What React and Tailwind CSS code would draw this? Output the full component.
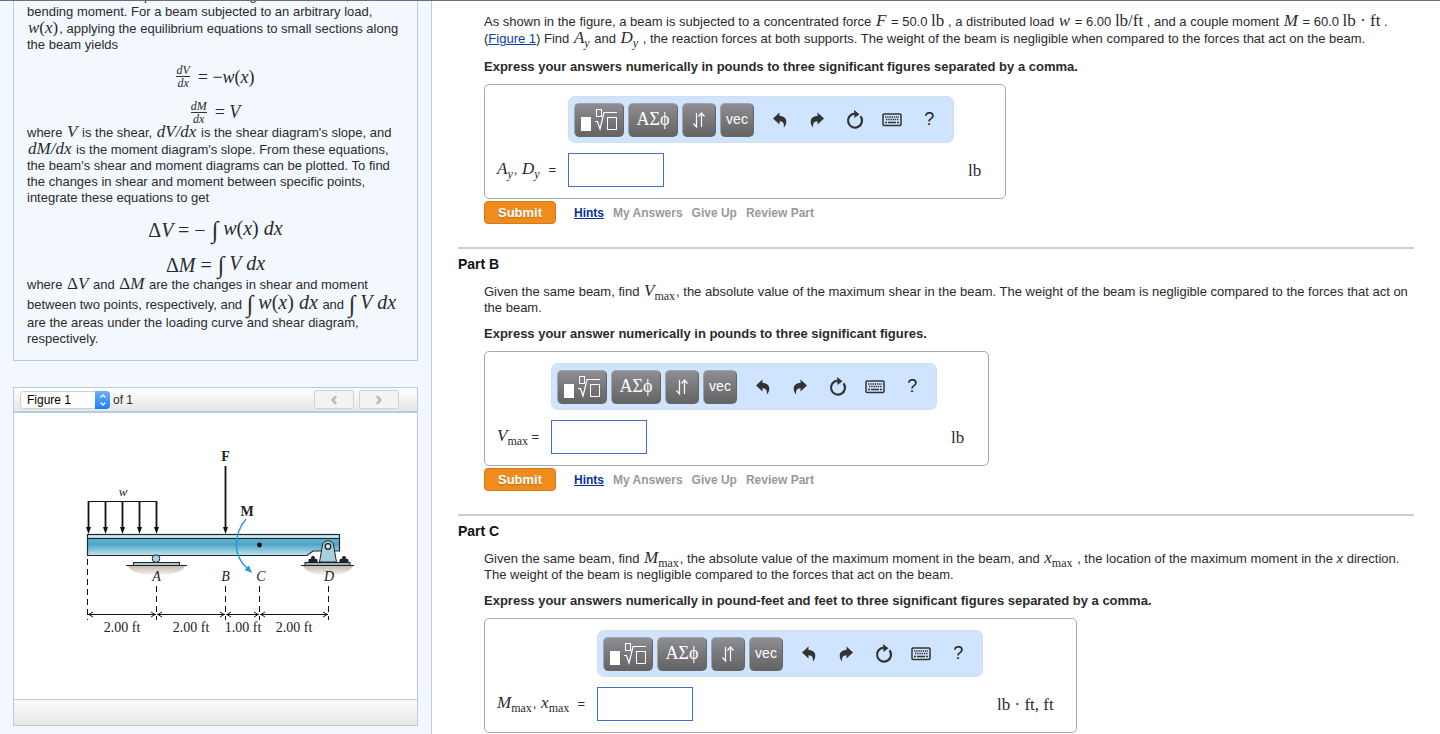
import React from 'react';
import { ChevronDown, ChevronUp, ChevronLeft, ChevronRight } from 'lucide-react';

const MathText = ({ children, size = 'text-[17px]' }) => (
  <span className={`mx-px font-['Liberation_Serif',serif] italic leading-[15px] ${size}`}>{children}</span>
);

const Up = ({ children }) => <span className="not-italic">{children}</span>;

const Sub = ({ children }) => (
  <span className="inline-block translate-y-1 text-[12px] leading-none">{children}</span>
);

const Unit = ({ children }) => (
  <span className="font-['Liberation_Serif',serif] text-[17px] leading-[15px]">{children}</span>
);

const Frac = ({ top, bottom }) => (
  <span className="inline-flex flex-col items-center text-[12px] leading-[12px]">
    <span className="border-b border-[#333]">{top}</span>
    <span>{bottom}</span>
  </span>
);

const Int = () => <span className="align-[-3px] not-italic text-[24px] leading-[22px]">∫</span>;

const Equation = ({ children, className }) => (
  <div className={`flex items-center justify-center font-['Liberation_Serif',serif] italic leading-none ${className}`}>
    {children}
  </div>
);

const Theory = () => (
  <section className="border border-t-0 border-[#b9cbe0] px-[13px] pb-[13px] leading-4">
    <div className="-mt-[13px]">about the relationship that exists among the load, shear, and</div>
    <p>
      bending moment. For a beam subjected to an arbitrary load,<br />
      <MathText>w<Up>(</Up>x<Up>)</Up></MathText>, applying the equilibrium equations to small sections along the beam yields
    </p>
    <Equation className="mt-[6px] h-[35px] gap-2 text-[18px]">
      <Frac top="dV" bottom="dx" />
      <span><Up>= −</Up>w<Up>(</Up>x<Up>)</Up></span>
    </Equation>
    <Equation className="mt-[6px] h-6 gap-2 text-[18px]">
      <Frac top="dM" bottom="dx" />
      <span><Up>=</Up> V</span>
    </Equation>
    <p>
      where <MathText>V</MathText> is the shear, <MathText>dV/dx</MathText> is the shear diagram's slope, and<br />
      <MathText>dM/dx</MathText> is the moment diagram's slope. From these equations, the beam's shear and moment
      diagrams can be plotted. To find the changes in shear and moment between specific points, integrate these
      equations to get
    </p>
    <Equation className="mt-[6px] h-[35px] gap-[6px] text-[20px]">
      <span><Up>Δ</Up>V <Up>= −</Up></span>
      <span><Int /> w<Up>(</Up>x<Up>)</Up> dx</span>
    </Equation>
    <Equation className="mt-[6px] h-[23px] gap-[6px] text-[20px]">
      <span><Up>Δ</Up>M <Up>=</Up></span>
      <span><Int /> V dx</span>
    </Equation>
    <p>
      where <MathText><Up>Δ</Up>V</MathText> and <MathText><Up>Δ</Up>M</MathText> are the changes in shear and moment<br />
      between two points, respectively, and{' '}
      <MathText size="text-[20px]"><Int /> w<Up>(</Up>x<Up>)</Up> dx</MathText> and{' '}
      <MathText size="text-[20px]"><Int /> V dx</MathText><br />
      are the areas under the loading curve and shear diagram, respectively.
    </p>
  </section>
);

const BeamDiagram = () => (
  <svg width="300" height="200" viewBox="0 0 300 200" role="img" aria-label="Loaded beam">
    <defs>
      <linearGradient id="beam" x1="0" y1="0" x2="0" y2="1">
        <stop offset="0" stopColor="#6fb9d3" />
        <stop offset="0.35" stopColor="#4aa5c6" />
        <stop offset="1" stopColor="#c4e3ee" />
      </linearGradient>
      <linearGradient id="ground" x1="0" y1="0" x2="0" y2="1">
        <stop offset="0" stopColor="#c5bbae" />
        <stop offset="1" stopColor="#f6f3ef" />
      </linearGradient>
    </defs>

    {/* beam */}
    <path d="M17.5 98 H269.5 V111 H243 L237 115.5 H17.5 Z" fill="url(#beam)" stroke="#1f2a30" strokeWidth="1.2" />
    <rect x="17.5" y="94.5" width="252" height="4" fill="#cfe8f2" stroke="#1f2a30" strokeWidth="1.2" />

    {/* roller support at A */}
    <path d="M58 126 H115 Q111 135 87 135 Q62 135 58 126 Z" fill="url(#ground)" />
    <rect x="63.5" y="122.5" width="46" height="3" fill="#a9c8d6" stroke="#222" />
    <path d="M56 125.5 H117" stroke="#222" />
    <circle cx="86" cy="118.6" r="3.8" fill="#a8d4e6" stroke="#222" />

    {/* pin support at D */}
    <path d="M233 126 H283 Q279 135 258 135 Q237 135 233 126 Z" fill="url(#ground)" />
    <rect x="235" y="122.5" width="45" height="3" fill="#8fb3c3" stroke="#222" />
    <path d="M231 125.5 H284" stroke="#222" />
    <path d="M239 122 V119.5 H241 L242 116.5 H244 L245 119.5 H247 V122 Z M270 122 V119.5 H272 L273 116.5 H275 L276 119.5 H278 V122 Z" fill="#222" stroke="#222" />
    <path d="M249.5 122 L252.5 105 A5.7 5.7 0 0 1 263.5 105 L266.5 122 Z" fill="#a8cfe0" stroke="#222" />
    <circle cx="258" cy="106.5" r="2.8" fill="#d5e3e8" stroke="#222" strokeWidth="1.3" />

    {/* distributed load and force */}
    <path d="M18.5 61.5 H87" stroke="#111" strokeWidth="1.2" />
    {[18.5, 35.5, 52.5, 69.5, 86.5].map((x) => (
      <g key={x}>
        <path d={`M${x} 61 V88`} stroke="#111" strokeWidth="1.8" />
        <path d={`M${x - 2.5} 87 H${x + 2.5} L${x} 94 Z`} fill="#111" />
      </g>
    ))}
    <path d="M155.5 26 V88" stroke="#111" strokeWidth="1.8" />
    <path d="M153 87 H158 L155.5 94 Z" fill="#111" />

    {/* couple moment */}
    <path d="M176 79 C163 95 163 116 177 128" fill="none" stroke="#1c9ddb" strokeWidth="1.4" />
    <path d="M182 133 L174.5 130 L179 125.5 Z" fill="#1c9ddb" />
    <circle cx="189.5" cy="105" r="2.4" fill="#111" />

    {/* dimension lines */}
    <g stroke="#111" fill="none">
      <path d="M17.5 119 V180" strokeDasharray="6 4" />
      <path d="M86.5 146 V180 M155.5 146 V180 M189.5 146 V180 M258.5 146 V180" strokeDasharray="6 4" />
      {[[18, 86], [87, 155], [156, 189], [190, 258]].map(([a, b]) => (
        <path key={a} d={`M${a} 174.5 H${b} M${a + 5} 172 L${a + 1} 174.5 L${a + 5} 177 M${b - 5} 172 L${b - 1} 174.5 L${b - 5} 177`} />
      ))}
    </g>

    <g fill="#222" fontFamily="Liberation Serif, serif" fontSize="14" textAnchor="middle">
      <text x="155.5" y="21" fontWeight="bold">F</text>
      <text x="177" y="76" fontWeight="bold">M</text>
      <g fontStyle="italic">
        <text x="53" y="56" fontSize="13">w</text>
        <text x="86.5" y="141">A</text>
        <text x="155.5" y="141">B</text>
        <text x="191" y="141">C</text>
        <text x="259" y="141">D</text>
      </g>
      <text x="52" y="192">2.00 ft</text>
      <text x="121" y="192">2.00 ft</text>
      <text x="173" y="192">1.00 ft</text>
      <text x="224" y="192">2.00 ft</text>
    </g>
  </svg>
);

const navButton =
  'flex h-[19px] w-10 items-center justify-center rounded-xs border border-[#d2d2d2] bg-[#f3f3f3] text-[#bcbcbc]';

const FigurePanel = () => (
  <section className="mt-[26px] border border-[#b9cbe0] bg-white">
    <div className="flex h-[25px] items-center border-b-2 border-[#b9cbe0] bg-linear-to-b from-white to-[#e6e6e6] pl-[6px] pr-[18px] text-[12px]">
      <div className="relative">
        <select aria-label="Figure" className="block h-[18px] w-[90px] appearance-none rounded-[4px] border border-[#cfcfcf] bg-white pl-[6px] text-[12px] leading-4 text-black">
          <option>Figure 1</option>
        </select>
        <span className="pointer-events-none absolute right-0 top-0 flex h-[18px] w-[15px] flex-col items-center justify-center rounded-r-[4px] bg-linear-to-b from-[#6bb3fa] to-[#1a7bf8] text-white">
          <ChevronUp size={8} strokeWidth={4} />
          <ChevronDown size={8} strokeWidth={4} />
        </span>
      </div>
      <span className="ml-[3px]">of 1</span>
      <div className="ml-auto flex gap-[5px]">
        <button aria-label="Previous figure" className={navButton}>
          <ChevronLeft size={12} strokeWidth={5} />
        </button>
        <button aria-label="Next figure" className={navButton}>
          <ChevronRight size={12} strokeWidth={5} />
        </button>
      </div>
    </div>
    <div className="h-[286px] pl-14 pt-[27px]">
      <BeamDiagram />
    </div>
    <div className="h-[26px] border-t border-[#b9cbe0] bg-linear-to-b from-[#fafafa] to-[#e9e9e9]" />
  </section>
);

const TemplateIcon = () => (
  <svg width="38" height="24" viewBox="0 0 38 24" fill="none" stroke="#fff">
    <rect x="1" y="9" width="10" height="14" fill="#fff" stroke="none" />
    <rect x="16.5" y="1.5" width="5" height="7" />
    <path d="M15 13.5 H17.5 L20 21 L24 4.5 H37" strokeWidth="1.2" />
    <rect x="27.5" y="9.5" width="9" height="12" />
  </svg>
);

const ArrowsIcon = () => (
  <svg width="14" height="18" viewBox="0 0 14 18" fill="none" stroke="#fff" strokeWidth="1.2">
    <path d="M4.5 2 V16 M1.5 12.5 L4.5 16 V12.5 M9.5 16 V2 M6.5 5.5 L9.5 2 L12.5 5.5" />
  </svg>
);

const UndoIcon = () => (
  <svg width="16" height="18" viewBox="0 0 16 18" fill="#333">
    <path d="M1 7.5 L7.5 1.5 V5 C12 5 14.5 7.5 14.3 11 C14.2 13.5 13 15.5 11.8 16.5 C12.3 13 11.5 10.3 7.5 10.2 V13.5 Z" />
  </svg>
);

const RedoIcon = () => (
  <svg width="16" height="18" viewBox="0 0 16 18" fill="#333">
    <path d="M15 7.5 L8.5 1.5 V5 C4 5 1.5 7.5 1.7 11 C1.8 13.5 3 15.5 4.2 16.5 C3.7 13 4.5 10.3 8.5 10.2 V13.5 Z" />
  </svg>
);

const ResetIcon = () => (
  <svg width="18" height="20" viewBox="0 0 18 20">
    <path d="M14.5 6.2 A7 7 0 1 1 8.5 3.6" fill="none" stroke="#333" strokeWidth="2.2" />
    <path d="M8 0 L13.5 4.2 L8.5 8 Z" fill="#333" />
  </svg>
);

const KeyboardIcon = () => (
  <svg width="20" height="14" viewBox="0 0 20 14" fill="none" stroke="#333">
    <rect x="1" y="1" width="18" height="11.5" rx="1" strokeWidth="1.5" />
    <path d="M3 4 H17 M4 6.5 H17" strokeWidth="1.5" strokeDasharray="1.4 0.8" />
    <path d="M3 9.5 H5 M6 9.5 H14 M15 9.5 H17" strokeWidth="1.5" />
  </svg>
);

const grayButton =
  'flex h-[34px] items-center justify-center rounded-[5px] border border-[#a4a4a8] border-b-[#666] border-r-[#666] bg-linear-to-b from-[#8d8d93] to-[#646464] text-white';
const iconButton = 'flex h-[34px] w-[38px] items-center justify-center';

const Toolbar = () => (
  <div className="flex h-[47px] items-center rounded-[7px] border border-[#d6dde6] bg-[#cfe5ff] px-[5px]">
    <div className="mr-[7px] flex gap-1">
      <button aria-label="Templates" className={`${grayButton} w-[50px]`}><TemplateIcon /></button>
      <button aria-label="Symbols" className={`${grayButton} w-[50px] font-['Liberation_Serif',serif] text-[18px]`}>ΑΣϕ</button>
      <button aria-label="Arrows" className={`${grayButton} w-[34px]`}><ArrowsIcon /></button>
      <button className={`${grayButton} w-[34px] text-[14px]`}>vec</button>
    </div>
    <button aria-label="Undo" className={iconButton}><UndoIcon /></button>
    <button aria-label="Redo" className={iconButton}><RedoIcon /></button>
    <button aria-label="Reset" className={iconButton}><ResetIcon /></button>
    <button aria-label="Keyboard" className={iconButton}><KeyboardIcon /></button>
    <button aria-label="Help" className={`${iconButton} text-[18px] text-[#222]`}>?</button>
  </div>
);

const AnswerBox = ({ id, label, labelWidth, unit, unitWidth }) => (
  <div>
    <div className="flex h-[115px] w-fit items-end rounded-[5px] border border-[#aaa] pb-[11px] pl-[11px] pr-[23px]">
      <label htmlFor={id} className={`mr-3 flex h-[34px] items-center justify-between whitespace-nowrap ${labelWidth}`}>
        <span>{label}</span>
        <span>=</span>
      </label>
      <div className="w-[386px]">
        <Toolbar />
        <input id={id} type="text" className="mt-[10px] block h-[34px] w-24 border border-[#3f6fd0] bg-white px-2" />
      </div>
      <div className={`ml-[14px] flex h-[34px] items-center whitespace-nowrap ${unitWidth}`}>
        <Unit>{unit}</Unit>
      </div>
    </div>
    <div className="mt-[2px] flex items-center gap-[9px] text-[12px] font-bold text-[#999]">
      <button className="mr-[9px] h-[23px] w-[72px] rounded-[4px] border border-[#d67a1c] bg-[#f08c1e] text-[13px] text-white text-shadow-sm">Submit</button>
      <a href="#hints" className="text-[#0a2f9c] underline">Hints</a>
      <span>My Answers</span>
      <span>Give Up</span>
      <span>Review Part</span>
    </div>
  </div>
);

const Part = ({ title, prompt, instruction, answer }) => (
  <section>
    {title && (
      <h2 className="mt-[23px] border-t-2 border-[#ccc] pt-[6px] text-[14px] font-bold leading-[18px] text-[#111]">{title}</h2>
    )}
    <div className="pl-[26px]">
      <p className={title ? 'mt-[10px] leading-4' : 'mt-3 pb-[2px] leading-4'}>{prompt}</p>
      <p className="mb-[9px] mt-[10px] font-bold leading-4">{instruction}</p>
      <AnswerBox {...answer} />
    </div>
  </section>
);

const vmax = <MathText>V<Sub><Up>max</Up></Sub></MathText>;
const mmax = <MathText>M<Sub><Up>max</Up></Sub></MathText>;
const xmax = <MathText>x<Sub><Up>max</Up></Sub></MathText>;
const ay = <MathText>A<Sub>y</Sub></MathText>;
const dy = <MathText>D<Sub>y</Sub></MathText>;

const App = () => (
  <div className="flex h-screen overflow-hidden border-t border-[#6e6e6e] bg-white font-['Liberation_Sans',Arial,sans-serif] text-[13px] text-[#2b2b2b]">
    <aside className="w-[30%] shrink-0 border-r border-[#b9cbe0] bg-[#f3f8ff] px-[13px]">
      <Theory />
      <FigurePanel />
    </aside>
    <main className="min-w-0 flex-1 px-[26px]">
      <Part
        prompt={
          <>
            As shown in the figure, a beam is subjected to a concentrated force <MathText>F</MathText> = 50.0{' '}
            <Unit>lb</Unit> , a distributed load <MathText>w</MathText> = 6.00 <Unit>lb/ft</Unit> , and a couple
            moment <MathText>M</MathText> = 60.0 <Unit>lb · ft</Unit> . (
            <a href="#figure-1" className="text-[#0a3cb0] underline">Figure 1</a>) Find {ay} and {dy} , the reaction
            forces at both supports. The weight of the beam is negligible when compared to the forces that act on the
            beam.
          </>
        }
        instruction="Express your answers numerically in pounds to three significant figures separated by a comma."
        answer={{ id: 'answer-a', label: <>{ay}, {dy}</>, labelWidth: 'w-[60px]', unit: 'lb', unitWidth: 'w-[14px]' }}
      />
      <Part
        title="Part B"
        prompt={
          <>
            Given the same beam, find {vmax}, the absolute value of the maximum shear in the beam. The weight of the
            beam is negligible compared to the forces that act on the beam.
          </>
        }
        instruction="Express your answer numerically in pounds to three significant figures."
        answer={{ id: 'answer-b', label: vmax, labelWidth: 'w-[43px]', unit: 'lb', unitWidth: 'w-[14px]' }}
      />
      <Part
        title="Part C"
        prompt={
          <>
            Given the same beam, find {mmax}, the absolute value of the maximum moment in the beam, and {xmax} , the
            location of the maximum moment in the <i>x</i> direction. The weight of the beam is negligible compared to
            the forces that act on the beam.
          </>
        }
        instruction="Express your answers numerically in pound-feet and feet to three significant figures separated by a comma."
        answer={{ id: 'answer-c', label: <>{mmax}, {xmax}</>, labelWidth: 'w-[89px]', unit: 'lb · ft, ft', unitWidth: 'w-[56px]' }}
      />
    </main>
  </div>
);

export default App;
